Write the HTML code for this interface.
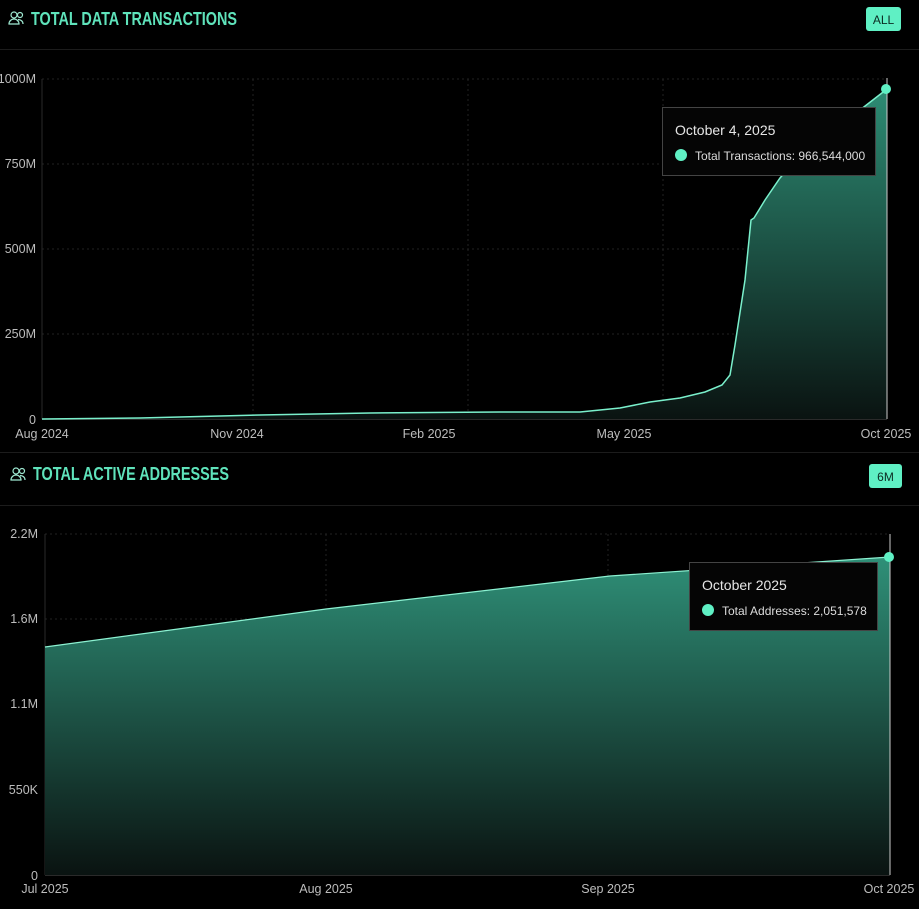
<!DOCTYPE html>
<html><head><meta charset="utf-8"><style>
html,body{margin:0;padding:0;background:#000;width:919px;height:909px;overflow:hidden;font-family:"Liberation Sans",sans-serif}
</style></head><body>
<svg width="919" height="909" viewBox="0 0 919 909" xmlns="http://www.w3.org/2000/svg" style="position:absolute;left:0;top:0">
<defs>
<linearGradient id="g1" x1="0" y1="0" x2="0" y2="1"><stop offset="0" stop-color="#2d8c74"/><stop offset="1" stop-color="#0a1311"/></linearGradient>
<linearGradient id="g2" x1="0" y1="0" x2="0" y2="1"><stop offset="0" stop-color="#2f9078"/><stop offset="1" stop-color="#0a1311"/></linearGradient>
</defs>
<g fill="none" stroke="#9fe9d2" stroke-width="1.2"><circle cx="14" cy="15" r="3"/><circle cx="20" cy="15" r="2.5"/><path d="M9 24c0-3 2.5-5 5-5s5 2 5 5zM18 19.5c2.5 0 5 1.5 5 4.5"/></g>
<text x="31" y="25" fill="#5fe3bb" font-size="18" font-weight="bold" textLength="206" lengthAdjust="spacingAndGlyphs">TOTAL DATA TRANSACTIONS</text>
<rect x="866" y="7" width="35" height="24" rx="3" fill="#5ff0c4"/>
<text x="883.5" y="24" fill="#0b2b22" font-size="12" text-anchor="middle">ALL</text>
<line x1="0" y1="49.5" x2="919" y2="49.5" stroke="#1c1c1c"/>
<g stroke="#222" stroke-dasharray="2,3"><line x1="42" y1="79" x2="887" y2="79"/><line x1="42" y1="164" x2="887" y2="164"/><line x1="42" y1="249" x2="887" y2="249"/><line x1="42" y1="334" x2="887" y2="334"/><line x1="253" y1="79" x2="253" y2="419"/><line x1="468" y1="79" x2="468" y2="419"/><line x1="663" y1="79" x2="663" y2="419"/></g>
<line x1="42" y1="79" x2="42" y2="419" stroke="#2a2a2a"/>
<line x1="42" y1="419.5" x2="887" y2="419.5" stroke="#2a2a2a"/>
<g fill="#bdbdbd" font-size="12.5" text-anchor="end"><text x="36" y="83">1000M</text><text x="36" y="168">750M</text><text x="36" y="253">500M</text><text x="36" y="338">250M</text><text x="36" y="424">0</text></g>
<g fill="#bdbdbd" font-size="12.5" text-anchor="middle"><text x="42" y="438">Aug 2024</text><text x="237" y="438">Nov 2024</text><text x="429" y="438">Feb 2025</text><text x="624" y="438">May 2025</text><text x="886" y="438">Oct 2025</text></g>
<path d="M42 419L140 418L260 415L370 413L500 412L580 412L620 408L650 402L680 398L705 392L722 385L730 375L735 345L745 280L751 220L754 218L765 200L780 178L800 155L830 130L860 110L887 89L887 419Z" fill="url(#g1)"/>
<path d="M42 419L140 418L260 415L370 413L500 412L580 412L620 408L650 402L680 398L705 392L722 385L730 375L735 345L745 280L751 220L754 218L765 200L780 178L800 155L830 130L860 110L887 89" fill="none" stroke="#7af0cc" stroke-width="1.5"/>
<line x1="887" y1="78" x2="887" y2="419" stroke="#ccc" stroke-width="1"/>
<circle cx="886" cy="89" r="5" fill="#5ff0c4"/>
<rect x="662.5" y="107.5" width="213" height="68" fill="#050505" stroke="#444"/>
<text x="675" y="135" fill="#e6e6e6" font-size="14">October 4, 2025</text>
<circle cx="681" cy="155" r="6" fill="#5ff0c4"/>
<text x="695" y="160" fill="#dcdcdc" font-size="12">Total Transactions: 966,544,000</text>
<line x1="0" y1="452.5" x2="919" y2="452.5" stroke="#1c1c1c"/>
<g fill="none" stroke="#9fe9d2" stroke-width="1.2"><circle cx="16" cy="471" r="3"/><circle cx="22" cy="471" r="2.5"/><path d="M11 480c0-3 2.5-5 5-5s5 2 5 5zM20 475.5c2.5 0 5 1.5 5 4.5"/></g>
<text x="33" y="480" fill="#5fe3bb" font-size="18" font-weight="bold" textLength="196" lengthAdjust="spacingAndGlyphs">TOTAL ACTIVE ADDRESSES</text>
<rect x="869" y="464" width="33" height="24" rx="3" fill="#5ff0c4"/>
<text x="885.5" y="481" fill="#0b2b22" font-size="12" text-anchor="middle">6M</text>
<line x1="0" y1="505.5" x2="919" y2="505.5" stroke="#1c1c1c"/>
<g stroke="#222" stroke-dasharray="2,3"><line x1="45" y1="534" x2="890" y2="534"/><line x1="45" y1="619" x2="890" y2="619"/><line x1="45" y1="704" x2="890" y2="704"/><line x1="45" y1="790" x2="890" y2="790"/><line x1="326" y1="534" x2="326" y2="875"/><line x1="608" y1="534" x2="608" y2="875"/></g>
<line x1="45" y1="534" x2="45" y2="875" stroke="#2a2a2a"/>
<g fill="#bdbdbd" font-size="12.5" text-anchor="end"><text x="38" y="538">2.2M</text><text x="38" y="623">1.6M</text><text x="38" y="708">1.1M</text><text x="38" y="794">550K</text><text x="38" y="880">0</text></g>
<g fill="#bdbdbd" font-size="12.5" text-anchor="middle"><text x="45" y="893">Jul 2025</text><text x="326" y="893">Aug 2025</text><text x="608" y="893">Sep 2025</text><text x="889" y="893">Oct 2025</text></g>
<path d="M45 647L326 609L610 576L890 557L890 875L45 875Z" fill="url(#g2)"/>
<path d="M45 647L326 609L610 576L890 557" fill="none" stroke="#8cf2d2" stroke-width="1.2"/>
<line x1="45" y1="875.5" x2="890" y2="875.5" stroke="#2a2a2a"/>
<line x1="890" y1="534" x2="890" y2="875" stroke="#ccc"/>
<circle cx="889" cy="557" r="5" fill="#5ff0c4"/>
<rect x="689.5" y="562.5" width="188" height="68" fill="#050505" stroke="#444"/>
<text x="702" y="590" fill="#e6e6e6" font-size="14">October 2025</text>
<circle cx="708" cy="610" r="6" fill="#5ff0c4"/>
<text x="722" y="615" fill="#dcdcdc" font-size="12">Total Addresses: 2,051,578</text>
</svg>
</body></html>
